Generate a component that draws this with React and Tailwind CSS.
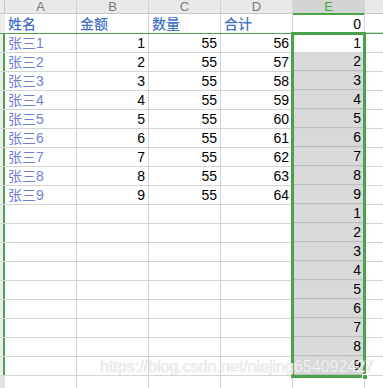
// Spreadsheet view: name / amount / qty / total with a selected helper column E.

const GREEN = "border-[#4aa24a]";

const rows = Array.from({ length: 18 }).map((_, i) => {
  if (i < 9) {
    const n = i + 1;
    return { name: `张三${n}`, b: n, c: 55, d: 55 + n, e: n };
  }
  return { name: "", b: "", c: "", d: "", e: i - 8 };
});

const cjk = "font-['Liberation_Sans','Noto_Sans_CJK_SC',sans-serif]";

function Cell({ children, className = "", right }) {
  return (
    <div
      className={`flex h-full w-[72px] shrink-0 items-end border-r border-[#d4d4d4] px-[3px] pb-[1px] text-[14px] leading-[16px] ${
        right ? "justify-end" : ""
      } ${className}`}
    >
      {children}
    </div>
  );
}

function HeaderRow() {
  const cols = ["A", "B", "C", "D"];
  return (
    <div className="flex h-[14px] border-b border-[#c8c8c8] bg-[#e9e9e9] text-[13px] leading-[13px] text-[#7a7a7a]">
      <div className="w-[5px] shrink-0 border-r border-[#c8c8c8]" />
      {cols.map((c) => (
        <div
          key={c}
          className="flex w-[72px] shrink-0 justify-center border-r border-[#d4d4d4]"
        >
          {c}
        </div>
      ))}
      <div className="flex h-[15px] w-[72px] shrink-0 justify-center border-b-2 border-r border-b-[#4aa24a] border-r-[#d4d4d4] bg-[#d4d4d4] text-[#4aa24a]">
        E
      </div>
      <div className="flex-1" />
    </div>
  );
}

export default function App() {
  return (
    <div className={`relative h-[388px] w-[383px] overflow-hidden bg-white ${cjk}`}>
      <HeaderRow />

      {/* title row */}
      <div className="flex h-[20px] border-b border-[#4aa24a]">
        <div className="w-[5px] shrink-0 bg-[#ececec]" />
        <Cell className="font-medium text-[#4472c4]">姓名</Cell>
        <Cell className="font-medium text-[#4472c4]">金额</Cell>
        <Cell className="font-medium text-[#4472c4]">数量</Cell>
        <Cell className="font-medium text-[#4472c4]">合计</Cell>
        <Cell right className="text-black">
          0
        </Cell>
        <div className="h-full flex-1 border-b border-[#d4d4d4]" />
      </div>

      {rows.map((r, i) => (
        <div key={i} className="flex h-[19px] border-b border-[#d4d4d4]">
          <div className={`w-[5px] shrink-0 border-r-2 bg-[#ececec] ${GREEN}`} />
          <Cell className="text-[#6f7fd6]">{r.name}</Cell>
          <Cell right className="text-black">
            {r.b}
          </Cell>
          <Cell right className="text-black">
            {r.c}
          </Cell>
          <Cell right className="text-black">
            {r.d}
          </Cell>
          <Cell
            right
            className={`text-black ${i === 0 ? "bg-white" : "bg-[#d9d9d9] border-b border-b-[#bdbdbd]"}`}
          >
            {r.e}
          </Cell>
          <div className="flex-1" />
        </div>
      ))}

      {/* last partial row */}
      <div className="flex h-[20px]">
        <div className="w-[5px] shrink-0 bg-[#e2e2e2]" />
        <Cell />
        <Cell />
        <Cell />
        <Cell />
        <Cell />
        <div className="flex-1" />
      </div>

      {/* selection box around E2:E19 */}
      <div
        className={`pointer-events-none absolute left-[291px] top-[32px] h-[346px] w-[75px] border-[3px] ${GREEN}`}
      />
      <div className="absolute left-[362px] top-[374px] h-[6px] w-[6px] border border-white bg-[#4aa24a]" />

      {/* watermark */}
      <div className="pointer-events-none absolute left-[100px] top-[358px] whitespace-nowrap font-['Liberation_Sans',sans-serif] text-[16px] leading-[18px] text-[#f2f2f2] [text-shadow:0_0_1px_#c4c4c4]">
        https://blog.csdn.net/niejing654092427
      </div>
    </div>
  );
}
